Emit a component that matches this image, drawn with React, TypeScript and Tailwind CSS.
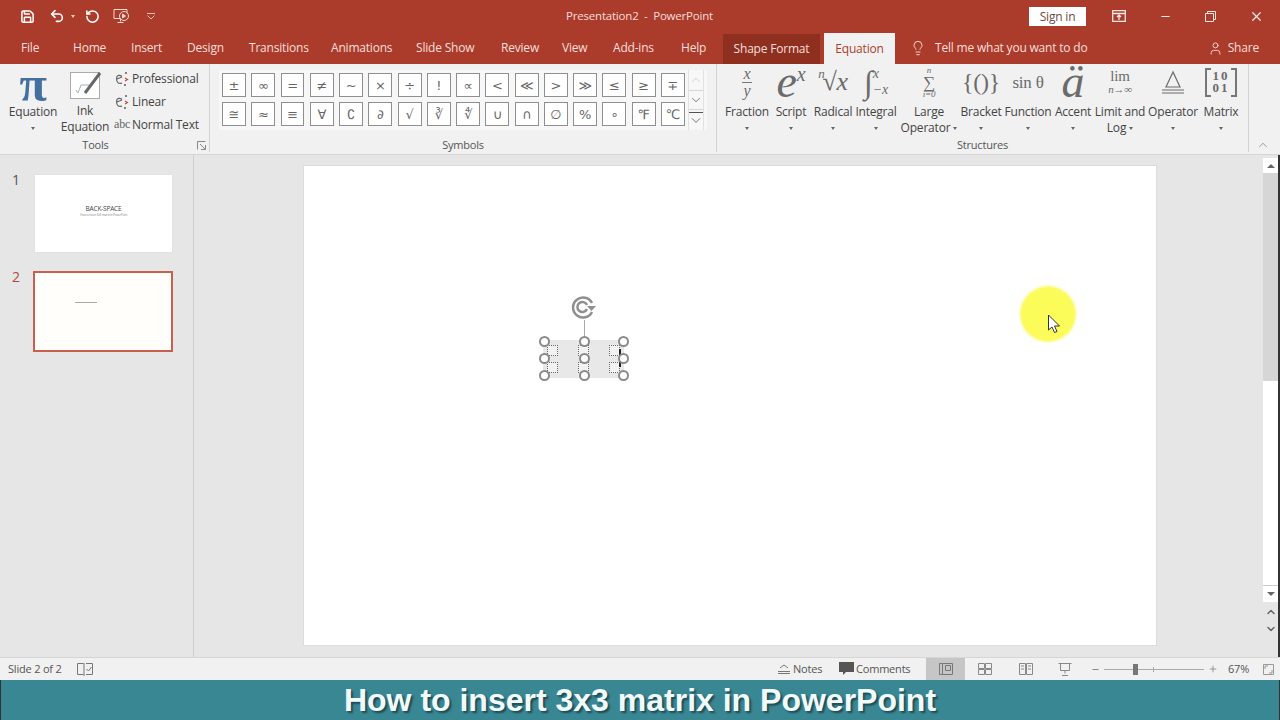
import type { ReactNode } from 'react';
import { ChevronDown, ChevronUp, Lightbulb, Minus, Plus, RotateCcw, Save, Undo2, User, X } from 'lucide-react';

const TABS = ['File', 'Home', 'Insert', 'Design', 'Transitions', 'Animations', 'Slide Show', 'Review', 'View', 'Add-ins', 'Help'];
const TAB_WIDTHS = [52, 58, 56, 62, 82, 85, 85, 61, 51, 68, 42];

const SYMBOLS = [
  ['±', '∞', '=', '≠', '~', '×', '÷', '!', '∝', '<', '≪', '>', '≫', '≤', '≥', '∓'],
  ['≅', '≈', '≡', '∀', '∁', '∂', '√', '∛', '∜', '∪', '∩', '∅', '%', '∘', '℉', '℃'],
];

const serif = "font-['Liberation_Serif',serif]";

// One structure button on the ribbon: a big glyph, label and dropdown caret
function Structure({ width, label, glyph }: { width: number; label: string; glyph: ReactNode }) {
  return (
    <div className="flex flex-col items-center shrink-0" style={{ width }}>
      <div className="h-[36px] flex items-center justify-center text-[#6b6b6b]">{glyph}</div>
      <div className="text-[12px] leading-[16px] mt-[4px] whitespace-nowrap">{label}</div>
      <Caret />
    </div>
  );
}

function Caret() {
  return <div className="mt-[7px] w-0 h-0 border-x-[2.5px] border-x-transparent border-t-[3px] border-t-[#666]" />;
}

function InlineCaret() {
  return <span className="inline-block ml-[3px] mb-[2px] w-0 h-0 border-x-[2.5px] border-x-transparent border-t-[3px] border-t-[#666]" />;
}

function Handle() {
  return <div className="w-[11px] h-[11px] rounded-full border-[2px] border-[#8a8a8a] bg-white" />;
}

function Placeholder() {
  return <div className="w-[11px] h-[11px] border border-dotted border-[#666] bg-[#f2f2f2]" />;
}

function EquationIcon() {
  return (
    <svg width="18" height="18" viewBox="0 0 18 18" fill="none" className="shrink-0">
      <path d="M8 6.500C6 4.500 2.500 5 2.500 8.500c0 3.500 2 6 5.500 4.500M2.800 9L8 7" stroke="#666" strokeWidth="1.200" />
      <path d="M11 2l2 2M13 2l-2 2" stroke="#666" strokeWidth=".8" />
      <path d="M11 8l2.500 1.500L11 11" stroke="#b5493a" strokeWidth="1.100" />
      <path d="M10 14l2 2M12 14l-2 2" stroke="#666" strokeWidth=".8" />
    </svg>
  );
}

export default function App() {
  return (
    <div className="w-[1280px] h-[720px] overflow-hidden flex flex-col font-['Open_Sans',sans-serif] tracking-[-0.2px] bg-[#e6e6e6]">
      {/* Title bar */}
      <div className="h-[32px] bg-[#ab3c2c] flex items-center text-[#f5dcd7] relative shrink-0">
        <div className="flex items-center pl-[20px]">
          <Save className="w-[15px] h-[15px] text-white" strokeWidth={2.4} />
          <Undo2 className="w-[16px] h-[16px] ml-[14px] text-white" strokeWidth={2.4} />
          <div className="ml-[6px] w-0 h-0 border-x-[2.5px] border-x-transparent border-t-[3px] border-t-[#f0cfc8]" />
          <RotateCcw className="w-[15px] h-[15px] ml-[10px] text-white" strokeWidth={2.4} />
          <svg width="18" height="16" viewBox="0 0 18 16" className="ml-[13px]" fill="none" stroke="#f3d9d3" strokeWidth="1">
            <path d="M1 1.500h13v9H1zM7.500 10.500v3M4.500 14.500h6" />
            <circle cx="11" cy="8" r="4.500" fill="#ab3c2c" />
            <path d="M9.500 6l3 2-3 2z" fill="#f3d9d3" />
          </svg>
          <svg width="10" height="8" viewBox="0 0 10 8" className="ml-[15px]" fill="none" stroke="#e9bcb3">
            <path d="M1 1.500h8M1.500 3.500l3.500 3.500 3.500-3.500" />
          </svg>
        </div>
        <div className="absolute left-0 right-0 text-center text-[11.5px] pr-[1px]">Presentation2&nbsp; -&nbsp; PowerPoint</div>
        <div className="ml-auto flex items-center z-10">
          <div className="w-[57px] h-[19px] bg-white text-[#6d4a44] text-[12px] leading-[19px] text-center">Sign in</div>
          <svg width="14" height="12" viewBox="0 0 14 12" className="ml-[26px]" fill="none" stroke="#f8e6e2" strokeWidth="1.300">
            <path d="M.7.7h12.600v10.600H.7zM.7 3.500h12.600M7 10V5M5 7l2-2 2 2" />
          </svg>
          <Minus className="w-[13px] h-[13px] ml-[33px] text-[#f8e6e2]" />
          <svg width="11" height="11" viewBox="0 0 11 11" className="ml-[33px]" fill="none" stroke="#f8e6e2">
            <path d="M.5 2.500h8v8h-8zM2.500 2.500v-2h8v8h-2" />
          </svg>
          <X className="w-[15px] h-[15px] ml-[33px] mr-[16px] text-[#f8e6e2]" />
        </div>
      </div>

      {/* Tab row */}
      <div className="h-[32px] bg-[#ab3c2c] flex items-end text-[12px] text-[#f6dfda] relative shrink-0">
        <div className="flex items-center h-full pl-[21px]">
          {TABS.map((t, i) => (
            <div key={t} className="whitespace-nowrap" style={{ width: TAB_WIDTHS[i] }}>
              {t}
            </div>
          ))}
        </div>
        <div className="h-[30px] w-[97px] bg-[#8f2f20] leading-[30px] text-center">Shape Format</div>
        <div className="ml-[4px] h-[31px] w-[71px] bg-[#f1f1f1] text-[#ab3c2c] leading-[31px] text-center">Equation</div>
        <div className="flex items-center h-full ml-[15px]">
          <Lightbulb className="w-[16px] h-[16px]" strokeWidth={1.4} />
          <span className="ml-[9px]">Tell me what you want to do</span>
        </div>
        <div className="flex items-center h-full ml-auto pr-[21px]">
          <User className="w-[15px] h-[15px]" strokeWidth={1.4} />
          <span className="ml-[5px]">Share</span>
        </div>
      </div>

      {/* Ribbon */}
      <div className="h-[91px] bg-[#f1f1f1] border-b border-[#d6d6d6] flex text-[#444] shrink-0">
        {/* Tools group */}
        <div className="w-[210px] border-r border-[#d2d2d2] mb-[2px] flex flex-col shrink-0">
          <div className="flex h-[76px]">
            <div className="w-[66px] flex flex-col items-center">
              <div className={`${serif} font-bold text-[50px] leading-[36px] text-[#44709f] h-[36px] mt-[2px]`}>π</div>
              <div className="text-[12px] leading-[16px] mt-[2px]">Equation</div>
              <Caret />
            </div>
            <div className="w-[38px] flex flex-col items-center">
              <div className="mt-[8px] w-[30px] h-[27px] border border-[#aaa] bg-white relative">
                <svg width="32" height="30" viewBox="0 0 32 30" fill="none" className="absolute left-0 top-[-3px]">
                  <path d="M5 20l2 3 3-8h8" stroke="#9db1c4" />
                  <path d="M14 23L29 3" stroke="#666" strokeWidth="3" />
                </svg>
              </div>
              <div className="text-[12px] leading-[16px] mt-[4px] text-center whitespace-nowrap">
                Ink
                <br />
                Equation
              </div>
            </div>
            <div className="ml-[10px] pt-[3px] text-[12px] leading-[23px]">
              <div className="flex items-center"><EquationIcon />Professional</div>
              <div className="flex items-center"><EquationIcon />Linear</div>
              <div className="flex items-center"><span className={`${serif} text-[12px] w-[18px] text-[#666]`}>abc</span>Normal Text</div>
            </div>
          </div>
          <div className="flex items-center justify-center text-[11px] leading-[14px] relative pr-[18px] text-[#555]">
            Tools
            <svg width="9" height="9" viewBox="0 0 9 9" className="absolute right-[3px] top-[3px]" fill="none" stroke="#888">
              <path d="M.5 8.500v-8h8M8.500 4v4.500H4M3 3l5 5" />
            </svg>
          </div>
        </div>

        {/* Symbols group */}
        <div className="w-[507px] border-r border-[#d2d2d2] mb-[2px] flex flex-col items-center shrink-0">
          <div className="h-[76px] w-full pl-[9px] pt-[6px]">
            <div className="w-[488px] h-[60px] bg-[#f7f7f7] flex pl-[3px] pt-[3px]">
              <div className="w-[463px] flex flex-col gap-[5px]">
                {SYMBOLS.map((row, r) => (
                  <div key={r} className="flex gap-[5.33px]">
                    {row.map((s) => (
                      <div
                        key={s}
                        className="w-[24px] h-[24px] border-[1.5px] border-[#8f8f8f] bg-white flex items-center justify-center text-[13px] leading-none text-[#666] font-['DejaVu_Sans',sans-serif]"
                      >
                        {s}
                      </div>
                    ))}
                  </div>
                ))}
              </div>
              <div className="ml-[3px] w-[16px] flex flex-col mt-[-3px] border-x border-[#e2e2e2] h-[60px]">
                <div className="h-[20px] flex items-center justify-center"><ChevronUp className="w-[18px] h-[18px] text-[#bbb]" strokeWidth={1.1} /></div>
                <div className="h-[20px] border-y border-[#d5d5d5] flex items-center justify-center"><ChevronDown className="w-[18px] h-[18px] text-[#555]" strokeWidth={1.3} /></div>
                <div className="h-[20px] flex flex-col items-center justify-center">
                  <div className="w-[14px] h-[1px] bg-[#555]" />
                  <ChevronDown className="w-[18px] h-[15px] text-[#555]" strokeWidth={1.3} />
                </div>
              </div>
            </div>
          </div>
          <div className="text-[11px] leading-[14px] text-[#555]">Symbols</div>
        </div>

        {/* Structures group */}
        <div className="w-[532px] border-r border-[#d2d2d2] mb-[2px] flex flex-col shrink-0">
          <div className="flex h-[76px] pl-[6px]">
            <Structure width={48} label="Fraction" glyph={
              <div className={`${serif} italic text-[16px] text-center`}><div className="border-b border-[#777] px-[2px] leading-[16px]">x</div><div className="leading-[16px]">y</div></div>
            } />
            <Structure width={40} label="Script" glyph={
              <div className={`${serif} italic flex items-start h-[36px]`}><span className="text-[46px] leading-[36px]">e</span><span className="text-[20px] leading-[20px]">x</span></div>
            } />
            <Structure width={44} label="Radical" glyph={
              <div className={`${serif} italic flex items-start h-[30px]`}><span className="text-[13px] leading-[13px]">n</span><span className="text-[26px] leading-[30px] ml-[-2px]">√x</span></div>
            } />
            <Structure width={42} label="Integral" glyph={
              <div className={`${serif} italic flex items-center`}><span className="text-[32px] leading-[36px]">∫</span><span className="text-[14px] leading-[16px]">x<br />−x</span></div>
            } />
            <div className="flex flex-col items-center w-[64px] shrink-0">
              <div className={`${serif} h-[36px] flex flex-col items-center text-[#6b6b6b]`}>
                <span className="text-[9px] italic leading-[9px] mt-[2px]">n</span>
                <span className="text-[17px] leading-[15px]">∑</span>
                <span className="text-[9px] italic leading-[9px]">i=0</span>
              </div>
              <div className="text-[12px] leading-[16px] mt-[4px] text-center whitespace-nowrap">Large<br />Operator<InlineCaret /></div>
            </div>
            <Structure width={40} label="Bracket" glyph={<div className={`${serif} text-[24px] leading-none`}>{'{()}'}</div>} />
            <Structure width={54} label="Function" glyph={<div className={`${serif} text-[17px] leading-none`}>sin θ</div>} />
            <Structure width={36} label="Accent" glyph={<div className={`${serif} italic text-[46px] leading-[36px]`}>ä</div>} />
            <div className="flex flex-col items-center w-[58px] shrink-0">
              <div className={`${serif} h-[36px] flex flex-col items-center justify-center text-[#6b6b6b]`}>
                <span className="text-[15px] leading-[14px]">lim</span>
                <span className="text-[11px] italic leading-[13px]">n→∞</span>
              </div>
              <div className="text-[12px] leading-[16px] mt-[4px] text-center whitespace-nowrap">Limit and<br />Log<InlineCaret /></div>
            </div>
            <Structure width={48} label="Operator" glyph={
              <svg width="24" height="26" viewBox="0 0 24 26" fill="none" stroke="#6b6b6b" strokeWidth="1.200">
                <path d="M12 3L5 18h14zM1 21h22M1 24h22" />
              </svg>
            } />
            <Structure width={48} label="Matrix" glyph={
              <div className="relative w-[32px] h-[29px] flex items-center justify-center">
                <svg width="32" height="29" viewBox="0 0 32 29" fill="none" stroke="#777" strokeWidth="2" className="absolute inset-0">
                  <path d="M6 1H1v27h5M26 1h5v27h-5" />
                </svg>
                <div className={`${serif} font-bold text-[13px] leading-[12px] text-center tracking-[2px]`}>10<br />01</div>
              </div>
            } />
          </div>
          <div className="text-[11px] leading-[14px] text-center text-[#555]">Structures</div>
        </div>
        <div className="flex-1 flex items-end pl-[7px] pb-[2px]"><ChevronUp className="w-[14px] h-[14px] text-[#777]" strokeWidth={1.2} /></div>
      </div>

      {/* Workspace */}
      <div className="flex-1 flex min-h-0">
        {/* Thumbnails pane */}
        <div className="w-[194px] border-r border-[#cfcfcf] shrink-0 pt-[20px] pl-[12px]">
          <div className="flex">
            <div className="w-[23px] text-[14px] text-[#555] leading-[8px] pt-[1px]">1</div>
            <div className="w-[137px] h-[77px] bg-white flex flex-col items-center pt-[30px] shadow-[0_0_1px_#ccc]">
              <div className="text-[6.5px] leading-[8px] text-[#444] whitespace-nowrap">BACK-SPACE</div>
              <div className="text-[3px] leading-[5px] text-[#888] whitespace-nowrap">How to insert 3x3 matrix in PowerPoint</div>
            </div>
          </div>
          <div className="flex mt-[19px]">
            <div className="w-[21px] text-[14px] text-[#b3493a] leading-[12px]">2</div>
            <div className="w-[140px] h-[81px] border-[2px] border-[#c8604f] bg-[#fffefb] pl-[40px] pt-[29px]">
              <div className="w-[22px] h-[1px] bg-[#aaa]" />
            </div>
          </div>
        </div>

        {/* Slide editing area */}
        <div className="flex-1 pt-[10px] pl-[109px] min-w-0">
          <div className="w-[854px] h-[481px] bg-white border border-[#dcdcdc] relative">
            {/* Selected equation box */}
            <div className="absolute left-[234px] top-[130px] w-[92px] h-[86px] flex flex-col items-center">
              <svg width="26" height="24" viewBox="0 0 26 24" fill="none" stroke="#8f8f8f" strokeWidth="2.500">
                <path d="M21 16a10 10 0 1 1 0-9M16 13a5 5 0 1 1 0-4" />
                <path d="M16 10h9l-4.500 5z" fill="#8f8f8f" stroke="none" />
              </svg>
              <div className="w-[1px] h-[17px] bg-[#aaa]" />
              <div className="absolute left-[5px] top-[44px] w-[81px] h-[38px] bg-[#e8e8e8] flex justify-between px-[4px] items-center">
                {[0, 1, 2].map((c) => (
                  <div key={c} className="flex flex-col gap-[6px]"><Placeholder /><Placeholder /></div>
                ))}
                <div className="absolute right-[3px] top-[9px] w-[2px] h-[18px] bg-[#222]" />
              </div>
              <div className="absolute left-[1px] top-[40px] w-[90px] h-[45px] flex flex-col justify-between">
                {[0, 1, 2].map((r) => (
                  <div key={r} className="flex justify-between"><Handle /><Handle /><Handle /></div>
                ))}
              </div>
            </div>
            {/* Highlighted mouse pointer */}
            <div className="absolute left-[716px] top-[120px] w-[56px] h-[56px] rounded-full bg-[#fbfb5a] blur-[1px]" />
            <svg width="16" height="20" viewBox="0 0 16 20" className="absolute left-[743px] top-[148px]">
              <path d="M1.500 1v15l3.500-3 2.500 5.500 2.500-1-2.500-5.500h5z" fill="#fff" stroke="#333" />
            </svg>
          </div>
        </div>

        {/* Vertical scrollbar */}
        <div className="w-[17px] border-r-[2px] border-[#333] flex flex-col shrink-0 pt-[3px]">
          <div className="h-[15px] bg-white flex items-center justify-center"><div className="w-0 h-0 border-x-[4px] border-x-transparent border-b-[4px] border-b-[#666]" /></div>
          <div className="h-[208px] bg-[#d6d6d6]" />
          <div className="h-[205px] bg-white border-b border-[#ccc]" />
          <div className="h-[16px] bg-white flex items-center justify-center"><div className="w-0 h-0 border-x-[4px] border-x-transparent border-t-[4px] border-t-[#666]" /></div>
          <div className="mt-[4px] flex flex-col items-center">
            <ChevronUp className="w-[12px] h-[12px] text-[#666]" strokeWidth={3} />
            <ChevronDown className="mt-[5px] w-[12px] h-[12px] text-[#666]" strokeWidth={3} />
          </div>
        </div>
      </div>

      {/* Status bar */}
      <div className="h-[23px] bg-[#f1f1f1] border-t border-[#d6d6d6] flex items-center text-[11px] text-[#555] shrink-0">
        <span className="ml-[8px] w-[52px] whitespace-nowrap">Slide 2 of 2</span>
        <svg width="16" height="13" viewBox="0 0 16 13" className="ml-[17px]" fill="none" stroke="#777">
          <path d="M6.500.5h-6v11h6M7 0v13M9 .5h6.500v11H9M9.500 6l2 2 3-4" />
        </svg>
        <div className="ml-auto flex items-center h-full">
          <svg width="14" height="10" viewBox="0 0 14 10" fill="none" stroke="#777"><path d="M1 7.500h12M1 9.500h12M3 4l4-3 4 3" /></svg>
          <span className="ml-[2px] w-[27px]">Notes</span>
          <svg width="15" height="14" viewBox="0 0 15 14" className="ml-[19px]"><path d="M0 0h15v10H7l-3 3v-3H0z" fill="#555" /></svg>
          <span className="ml-[2px] w-[51px]">Comments</span>
          <div className="ml-[19px] w-[39px] h-full bg-[#c6c6c6] flex items-center justify-center">
            <svg width="14" height="12" viewBox="0 0 14 12" fill="none" stroke="#777"><path d="M.5.5h3v11h-3zM3.500 11.500h10V.5h-10M6.500 2.500h5v5h-5z" /></svg>
          </div>
          <svg width="14" height="12" viewBox="0 0 14 12" className="ml-[13px]" fill="none" stroke="#888"><path d="M.5.5h6v5h-6zM7.500.5h6v5h-6zM.5 6.500h6v5h-6zM7.500 6.500h6v5h-6z" /></svg>
          <svg width="14" height="12" viewBox="0 0 14 12" className="ml-[27px]" fill="none" stroke="#888"><path d="M.5.5h6v11h-6zM7.500.5h6v11h-6zM2 3h3M2 6h3M9 3h3M9 6h3" /></svg>
          <svg width="14" height="13" viewBox="0 0 14 13" className="ml-[25px]" fill="none" stroke="#888"><path d="M.5.5h13M2.500.5v7h9v-7M7 7.500v3M4 12.500h6" /></svg>
          <Minus className="w-[9px] h-[9px] ml-[19px] text-[#666]" />
          <div className="ml-[4px] w-[100px] h-[1px] bg-[#aaa] relative">
            <div className="absolute left-[29px] top-[-5px] w-[5px] h-[11px] bg-[#777]" />
            <div className="absolute left-[49px] top-[-2px] w-[1px] h-[5px] bg-[#aaa]" />
          </div>
          <Plus className="w-[10px] h-[10px] ml-[4px] text-[#666]" strokeWidth={1.5} />
          <span className="ml-[10px] w-[21px]">67%</span>
          <svg width="11" height="11" viewBox="0 0 11 11" className="ml-[14px] mr-[6px]" fill="none" stroke="#999"><path d="M.5.5h10v10H.5zM2 5V2h3M9 6v3H6" /></svg>
        </div>
      </div>

      {/* Video caption banner */}
      <div className="h-[40px] bg-[#3a8794] border-x border-[#333] flex items-center justify-center shrink-0 text-[32px] tracking-normal font-bold text-[#f2fbfc] font-['Liberation_Sans',sans-serif] [text-shadow:2px_2px_2px_#1d4a52]">
        How to insert 3x3 matrix in PowerPoint
      </div>
    </div>
  );
}
